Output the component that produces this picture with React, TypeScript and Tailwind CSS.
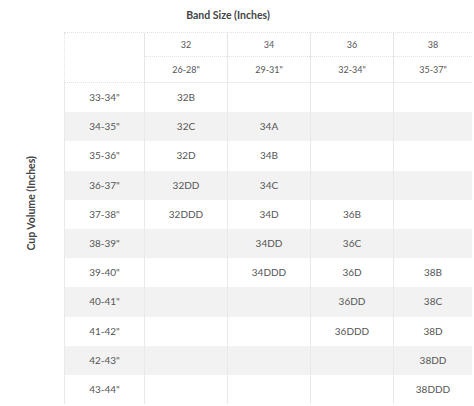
import React from "react";

const bands = [
  { size: "32", range: "26-28\"" },
  { size: "34", range: "29-31\"" },
  { size: "36", range: "32-34\"" },
  { size: "38", range: "35-37\"" },
];

const rows: [string, string, string, string, string][] = [
  ["33-34\"", "32B", "", "", ""],
  ["34-35\"", "32C", "34A", "", ""],
  ["35-36\"", "32D", "34B", "", ""],
  ["36-37\"", "32DD", "34C", "", ""],
  ["37-38\"", "32DDD", "34D", "36B", ""],
  ["38-39\"", "", "34DD", "36C", ""],
  ["39-40\"", "", "34DDD", "36D", "38B"],
  ["40-41\"", "", "", "36DD", "38C"],
  ["41-42\"", "", "", "36DDD", "38D"],
  ["42-43\"", "", "", "", "38DD"],
  ["43-44\"", "", "", "", "38DDD"],
];

const cols = "grid grid-cols-[80px_83px_83px_83px_79px]";

export default function App() {
  return (
    <div
      className="flex w-[474px] h-[406px] bg-white overflow-hidden text-[#555]"
      style={{ fontFamily: "Lato, 'Open Sans', sans-serif" }}
    >
      <div className="w-[64px] shrink-0 flex items-center justify-center h-full">
        <div className="[writing-mode:vertical-rl] rotate-180 font-bold text-[10.5px] text-[#444] whitespace-nowrap">
          Cup Volume (Inches)
        </div>
      </div>
      <div className="flex flex-col w-[410px]">
        <div className="h-[32px] w-[328px] flex items-center justify-center font-bold text-[10.5px] text-[#444]">
          Band Size (Inches)
        </div>
        <div className="w-[408px]">
          <div className={`${cols} border-t border-dotted border-[#e2e2e2]`}>
            <div className="border-l border-dotted border-[#e2e2e2] border-b border-b-solid h-[50px]" />
            {bands.map((b, i) => (
              <div
                key={b.size}
                className={`flex flex-col text-[9px] border-l border-[#e6e6e6] ${i === 3 ? "" : ""}`}
              >
                <div className="h-[24px] flex items-center justify-center border-b border-dotted border-[#e2e2e2]">
                  {b.size}
                </div>
                <div className="h-[26px] flex items-center justify-center border-b border-[#ececec]">
                  {b.range}
                </div>
              </div>
            ))}
          </div>
          {rows.map((r, ri) => (
            <div
              key={r[0]}
              className={`${cols} h-[29.2px] text-[10px] ${ri % 2 === 1 ? "bg-[#f2f2f2]" : "bg-white"}`}
            >
              {r.map((c, ci) => (
                <div
                  key={ci}
                  className="flex items-center justify-center border-l border-[#e9e9e9]"
                >
                  {c}
                </div>
              ))}
            </div>
          ))}
        </div>
      </div>
    </div>
  );
}
